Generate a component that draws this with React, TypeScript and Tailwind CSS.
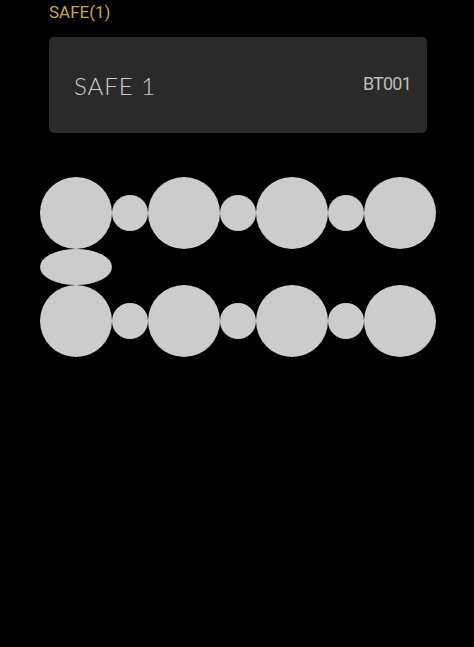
import React from "react";

const dot = "bg-[#cccccc] rounded-[50%] shrink-0";

function Row() {
  return (
    <div className="flex items-center">
      <div className={`${dot} w-[72px] h-[72px]`} />
      <div className={`${dot} w-[36px] h-[36px]`} />
      <div className={`${dot} w-[72px] h-[72px]`} />
      <div className={`${dot} w-[36px] h-[36px]`} />
      <div className={`${dot} w-[72px] h-[72px]`} />
      <div className={`${dot} w-[36px] h-[36px]`} />
      <div className={`${dot} w-[72px] h-[72px]`} />
    </div>
  );
}

export default function App() {
  return (
    <div className="w-full min-h-screen bg-black" style={{ fontFamily: "Roboto, 'Liberation Sans', sans-serif" }}>
      {/* header */}
      <div className="pl-[49px] h-[24px] text-[17px] leading-[24px] text-[#c9a640]">SAFE(1)</div>

      {/* safe card */}
      <div className="ml-[49px] w-[378px] mt-[13px] h-[96px] rounded-[5px] bg-[#2a2a2a] flex items-center justify-between pl-[25px] pr-[16px]">
        <span
          className="text-[24px] font-light tracking-[1px] text-[#d0d0d0] mt-[1px]"
          style={{ fontFamily: "Lato, 'Open Sans', sans-serif" }}
        >
          SAFE 1
        </span>
        <span className="text-[18px] tracking-[-0.8px] text-[#bdbdbd] -mt-[4px]">BT001</span>
      </div>

      {/* layout */}
      <div className="mt-[44px] flex justify-center pl-[1px]">
        <div className="flex flex-col">
          <Row />
          <div className={`${dot} w-[72px] h-[36px]`} />
          <Row />
        </div>
      </div>
    </div>
  );
}
